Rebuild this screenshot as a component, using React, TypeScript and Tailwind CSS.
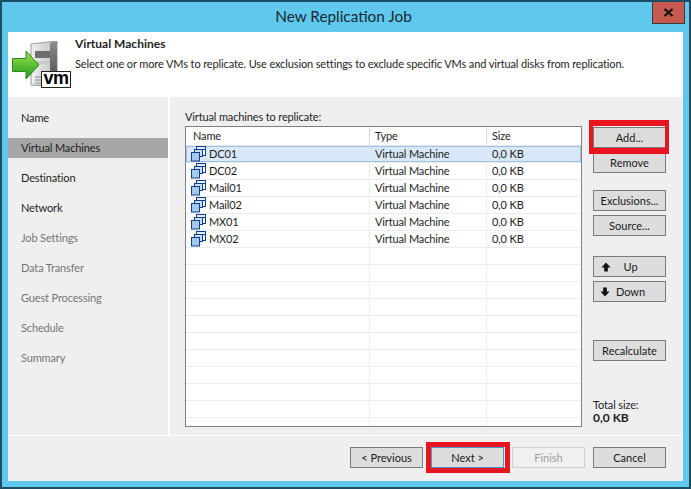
const font = { fontFamily: 'Lato, sans-serif' };

const steps = [
  { name: 'Name', enabled: true },
  { name: 'Virtual Machines', enabled: true, active: true },
  { name: 'Destination', enabled: true },
  { name: 'Network', enabled: true },
  { name: 'Job Settings' },
  { name: 'Data Transfer' },
  { name: 'Guest Processing' },
  { name: 'Schedule' },
  { name: 'Summary' },
];

const vms = ['DC01', 'DC02', 'Mail01', 'Mail02', 'MX01', 'MX02'];
const emptyRows = Array.from({ length: 11 }, (_, i) => i);

function VmIcon() {
  return (
    <svg width="16" height="16" viewBox="0 0 16 16" className="shrink-0">
      <rect x="5.5" y="0.5" width="9" height="9" fill="#e3eefa" stroke="#123f8c" />
      <rect x="8.5" y="3.5" width="6" height="6" fill="#f2f7fd" stroke="#123f8c" />
      <rect x="3.5" y="3.5" width="8" height="7" fill="#c6ddf5" stroke="#123f8c" />
      <rect x="0.5" y="6.5" width="8" height="8.5" fill="#a4c8ee" stroke="#123f8c" />
    </svg>
  );
}

function HeaderIcon() {
  return (
    <div className="relative w-[60px] h-[48px] shrink-0">
      <svg width="60" height="48" viewBox="0 0 60 48">
        <defs>
          <linearGradient id="front" x1="0" x2="1" y1="0" y2="0">
            <stop offset="0" stopColor="#f2f2f2" />
            <stop offset="1" stopColor="#bcbcbc" />
          </linearGradient>
          <linearGradient id="side" x1="0" x2="0" y1="0" y2="1">
            <stop offset="0" stopColor="#8d8d8d" />
            <stop offset="1" stopColor="#4c4c4c" />
          </linearGradient>
          <linearGradient id="arrow" x1="0" x2="0" y1="0" y2="1">
            <stop offset="0" stopColor="#9ee34d" />
            <stop offset="1" stopColor="#1f9a1c" />
          </linearGradient>
        </defs>
        <path d="M19 3 L45 0 L45 37 L36 45 L19 44 Z" fill="url(#front)" stroke="#9a9a9a" />
        <path d="M38 2 L45 0 L45 38 L38 42 Z" fill="url(#side)" />
        <rect x="23" y="10" width="15" height="7" fill="#6e6e6e" />
        <rect x="23" y="20" width="15" height="3" fill="#c9c9c9" />
        <path d="M23 36h7M23 39h7M23 42h7" stroke="#8a8a8a" />
        <path d="M0.5 17.5 H14 V10 L27 24 L14 38 V30.5 H0.5 Z" fill="url(#arrow)" stroke="#2c8a22" />
      </svg>
      <span className="absolute left-[29px] top-[30px] w-[30px] h-[17px] bg-white border border-[#222222] text-[18px] leading-[12px] font-bold text-black text-center tracking-[-0.5px]" style={{ fontFamily: '"Liberation Sans", sans-serif' }}>
        vm
      </span>
    </div>
  );
}

function Btn({ children, className = '', disabled = false }: { children: React.ReactNode; className?: string; disabled?: boolean }) {
  return (
    <div
      className={`w-[73px] h-[21px] shrink-0 flex items-center justify-center border pt-[1px] text-[11px] ${
        disabled ? 'border-[#d0d0d0] bg-[#f0f0f0] text-[#a0a0a0]' : 'border-[#7a7a7a] bg-[#dddddd] text-[#202020]'
      } ${className}`}
    >
      {children}
    </div>
  );
}

export default function App() {
  return (
    <div className="w-[691px] h-[489px] overflow-hidden relative bg-[#5fc8ec] border-2 border-[#1d4d63] flex flex-col" style={font}>
      {/* title bar */}
      <div className="h-[30px] shrink-0 relative flex items-center justify-center pb-[2px] pr-[4px] text-[15.3px] text-[#1a2a33]">
        New Replication Job
        <div className="absolute right-[4px] top-[-2px] w-[33px] h-[24px] bg-[#c75a4e] border border-[#3b3b3b] flex items-center justify-center">
          <svg width="11" height="9" viewBox="0 0 11 9">
            <path d="M1.5 1 L9.5 8 M9.5 1 L1.5 8" stroke="#111111" strokeWidth="2.2" />
          </svg>
        </div>
      </div>

      {/* client area */}
      <div className="mx-[6px] mb-[6px] flex-1 flex flex-col bg-[#efefef] min-h-0">
        <div className="h-[65px] shrink-0 bg-white flex pl-[4px] pt-[4px]">
          <div className="pt-[5px]">
            <HeaderIcon />
          </div>
          <div className="ml-[3px] text-[#1e1e1e]">
            <div className="text-[12px] font-bold leading-[15px]">Virtual Machines</div>
            <div className="text-[11px] tracking-[-0.12px] leading-[15px] mt-[5px] whitespace-nowrap">
              Select one or more VMs to replicate. Use exclusion settings to exclude specific VMs and virtual disks from replication.
            </div>
          </div>
        </div>

        <div className="flex-1 flex min-h-0 border-b border-white">
          {/* steps */}
          <div className="w-[162px] shrink-0 border-r-2 border-white pt-[11px] flex flex-col gap-[10px]">
            {steps.map((s) => (
              <div
                key={s.name}
                className={`h-[20px] pl-[13px] flex items-center text-[11px] tracking-[-0.14px] ${
                  s.active ? 'bg-[#a6a6a6] text-[#1e1e1e]' : s.enabled ? 'text-[#1e1e1e]' : 'text-[#767676]'
                }`}
              >
                {s.name}
              </div>
            ))}
          </div>

          {/* content */}
          <div className="flex-1 min-w-0 pl-[15px] pr-[17px] pt-[12px] pb-[8px] flex gap-[11px]">
            <div className="flex-1 min-w-0 flex flex-col">
              <div className="text-[11px] tracking-[-0.14px] leading-[15px] h-[17px] text-[#1e1e1e]">Virtual machines to replicate:</div>
              <div className="flex-1 min-h-0 border border-[#7f7f7f] bg-white overflow-hidden text-[11px] tracking-[-0.14px] text-[#1e1e1e]">
                <div className="flex h-[19px] border-b border-[#e8e8e8]">
                  <div className="w-[184px] border-r border-[#d8d8d8] pl-[7px] flex items-center">Name</div>
                  <div className="w-[117px] border-r border-[#d8d8d8] pl-[5px] flex items-center">Type</div>
                  <div className="flex-1 pl-[5px] flex items-center">Size</div>
                </div>
                {vms.map((vm, i) => (
                  <div key={vm} className={`flex h-[17px] border-b border-[#ececec] ${i === 0 ? 'bg-[#d9e8f9] ring-1 ring-inset ring-[#9cc0e6]' : ''}`}>
                    <div className={`w-[184px] border-r border-[#ececec] pl-[5px] flex items-center gap-[2px] ${i === 0 ? 'border-r-transparent' : ''}`}>
                      <VmIcon />
                      {vm}
                    </div>
                    <div className={`w-[117px] border-r border-[#ececec] pl-[5px] flex items-center ${i === 0 ? 'border-r-transparent' : ''}`}>Virtual Machine</div>
                    <div className="flex-1 pl-[5px] flex items-center">0,0 KB</div>
                  </div>
                ))}
                {emptyRows.map((i) => (
                  <div key={i} className="flex h-[17px] border-b border-[#ececec]">
                    <div className="w-[184px] border-r border-[#ececec]" />
                    <div className="w-[117px] border-r border-[#ececec]" />
                    <div className="flex-1" />
                  </div>
                ))}
              </div>
            </div>

            {/* side buttons */}
            <div className="w-[73px] shrink-0 flex flex-col pt-[18px] pb-[3px]">
              <Btn>Add...</Btn>
              <Btn className="mt-[4px]">Remove</Btn>
              <Btn className="mt-[17px]">Exclusions...</Btn>
              <Btn className="mt-[4px]">Source...</Btn>
              <Btn className="mt-[20px]">
                <span className="w-[22px] pl-[2px] leading-none">
                  <svg width="10" height="10" viewBox="0 0 10 10"><path d="M5 0.5 L9.5 5.5 H6.8 V9.5 H3.2 V5.5 H0.5 Z" fill="#111111" /></svg>
                </span>
                <span className="mr-[22px] ml-[2px]">Up</span>
              </Btn>
              <Btn className="mt-[4px]">
                <span className="w-[16px] pl-[2px] leading-none">
                  <svg width="10" height="10" viewBox="0 0 10 10"><path d="M5 9.5 L9.5 4.5 H6.8 V0.5 H3.2 V4.5 H0.5 Z" fill="#111111" /></svg>
                </span>
                <span className="mr-[16px] ml-[2px]">Down</span>
              </Btn>
              <Btn className="mt-[38px]">Recalculate</Btn>
              <div className="mt-auto text-[11px] tracking-[-0.14px] leading-[13px] text-[#1e1e1e]">
                <div>Total size:</div>
                <div className="font-bold text-[12px] tracking-normal">0,0 KB</div>
              </div>
            </div>
          </div>
        </div>

        {/* footer */}
        <div className="h-[45px] shrink-0 flex items-start justify-end gap-[8px] pt-[11px] pr-[17px]">
          <Btn>&lt; Previous</Btn>
          <Btn className="!border-[#4f93cf]">Next &gt;</Btn>
          <Btn disabled>Finish</Btn>
          <Btn>Cancel</Btn>
        </div>
      </div>

      {/* red annotation boxes */}
      <div className="absolute left-[587px] top-[118px] w-[80px] h-[34px] border-x-[4px] border-y-[6px] border-[#e8141f]" />
      <div className="absolute left-[424px] top-[440px] w-[84px] h-[31px] border-[5px] border-[#e8141f]" />
    </div>
  );
}
